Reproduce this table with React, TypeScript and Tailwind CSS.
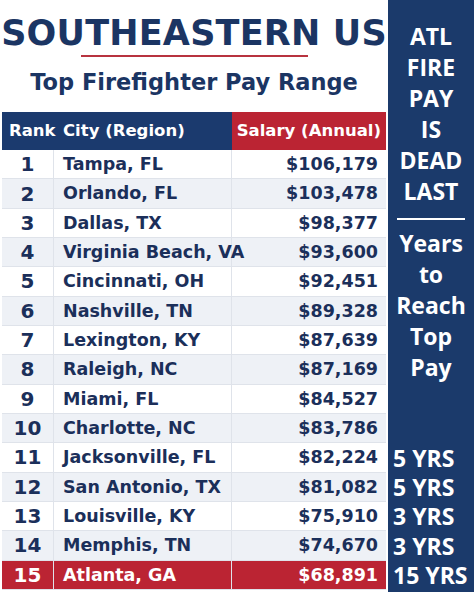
const rows = [
  { rank: 1, city: "Tampa, FL", salary: "$106,179" },
  { rank: 2, city: "Orlando, FL", salary: "$103,478" },
  { rank: 3, city: "Dallas, TX", salary: "$98,377" },
  { rank: 4, city: "Virginia Beach, VA", salary: "$93,600" },
  { rank: 5, city: "Cincinnati, OH", salary: "$92,451" },
  { rank: 6, city: "Nashville, TN", salary: "$89,328" },
  { rank: 7, city: "Lexington, KY", salary: "$87,639" },
  { rank: 8, city: "Raleigh, NC", salary: "$87,169" },
  { rank: 9, city: "Miami, FL", salary: "$84,527" },
  { rank: 10, city: "Charlotte, NC", salary: "$83,786" },
  { rank: 11, city: "Jacksonville, FL", salary: "$82,224" },
  { rank: 12, city: "San Antonio, TX", salary: "$81,082" },
  { rank: 13, city: "Louisville, KY", salary: "$75,910" },
  { rank: 14, city: "Memphis, TN", salary: "$74,670" },
  { rank: 15, city: "Atlanta, GA", salary: "$68,891" },
];

const headline = ["ATL", "FIRE", "PAY", "IS", "DEAD", "LAST"];
const years = ["Years", "to", "Reach", "Top", "Pay"];
const yrs = ["5 YRS", "5 YRS", "3 YRS", "3 YRS", "15 YRS"];

export default function App() {
  return (
    <div className="flex h-[592px] w-[474px] overflow-hidden bg-white">
      <div className="flex w-[388px] flex-col font-['DejaVu_Sans',sans-serif] font-bold text-[#1b2f5a]">
        <div className="flex h-[112px] flex-col items-center">
          <h1 className="mt-[13px] whitespace-nowrap text-[35px] leading-[40px] tracking-[0.2px] text-[#1b3563]">SOUTHEASTERN US</h1>
          <div className="mt-[2px] h-[2px] w-[227px] bg-[#b8333f]" />
          <h2 className="mt-[11px] whitespace-nowrap text-[22.5px] leading-[28px] text-[#1b3563]">Top Firefighter Pay Range</h2>
        </div>

        <div className="ml-[2px] w-[384px]">
          <div className="flex h-[38px] items-center whitespace-nowrap text-[16.5px] text-white">
            <div className="flex h-full w-[230px] items-center bg-[#1b3a6e] pl-[7px]">
              <span className="w-[54px]">Rank</span>
              <span>City (Region)</span>
            </div>
            <div className="flex h-full flex-1 items-center justify-end bg-[#bb2433] pr-[5px]">Salary (Annual)</div>
          </div>

          {rows.map((r) => {
            const last = r.rank === 15;
            const bg = last ? "bg-[#bb2433] text-white" : r.rank % 2 === 0 ? "bg-[#eef1f6]" : "bg-white";
            return (
              <div key={r.rank} className={`flex h-[29.33px] items-center border-b border-[#dfe3ea] ${bg}`}>
                <div className="flex h-full w-[52px] shrink-0 items-center justify-center border-r border-[#dfe3ea] text-[20px]">{r.rank}</div>
                <div className="relative z-10 flex h-full w-[178px] shrink-0 items-center whitespace-nowrap border-r border-[#dfe3ea] pl-[9px] text-[17.5px]">{r.city}</div>
                <div className="flex h-full flex-1 items-center justify-end pr-[8px] text-[17.5px]">{r.salary}</div>
              </div>
            );
          })}
        </div>
      </div>

      <div className="flex flex-1 flex-col bg-[#1b3a6b] font-['Open_Sans',sans-serif] font-bold text-white">
        <div className="mt-[21px] flex flex-col items-center text-[23px] leading-[31px]">
          {headline.map((w) => (
            <span key={w}>{w}</span>
          ))}
        </div>
        <div className="mx-auto mt-[11px] h-[2px] w-[68px] bg-white" />
        <div className="mt-[8px] flex flex-col items-center text-[23px] leading-[31px]">
          {years.map((w) => (
            <span key={w}>{w}</span>
          ))}
        </div>
        <div className="mt-auto mb-[2px] flex flex-col pl-[5px] text-[23px]">
          {yrs.map((y, i) => (
            <div key={i} className="flex h-[29.33px] items-center whitespace-nowrap leading-none">{y}</div>
          ))}
        </div>
      </div>
    </div>
  );
}
